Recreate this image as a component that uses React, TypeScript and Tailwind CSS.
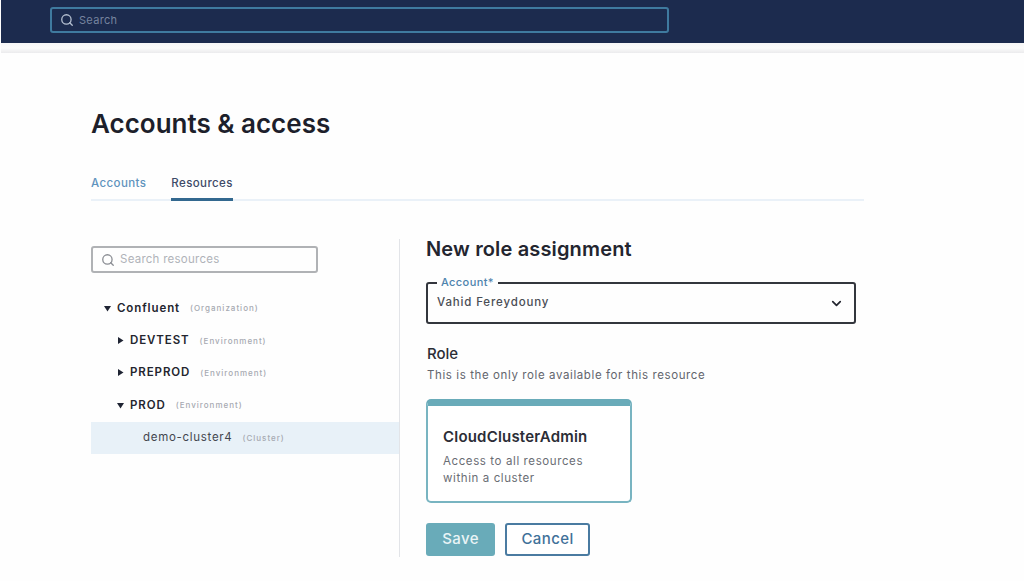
import { ChevronDown, Search } from "lucide-react"

const font = { fontFamily: "Inter, 'Noto Sans', sans-serif" }

interface TreeRow {
  name: string
  kind: string
  indent: string
  open?: boolean
  leaf?: boolean
  selected?: boolean
}

const rows: TreeRow[] = [
  { name: "Confluent", kind: "(Organization)", indent: "pl-[13px]", open: true },
  { name: "DEVTEST", kind: "(Environment)", indent: "pl-[26px]" },
  { name: "PREPROD", kind: "(Environment)", indent: "pl-[26px]" },
  { name: "PROD", kind: "(Environment)", indent: "pl-[26px]", open: true },
  { name: "demo-cluster4", kind: "(Cluster)", indent: "pl-[52px]", leaf: true, selected: true },
]

function Caret({ open }: { open?: boolean }) {
  return (
    <svg width="7" height="7" viewBox="0 0 7 7" className="shrink-0 text-[#1f2433]" fill="currentColor">
      {open ? <path d="M0 1h7L3.5 6.5z" /> : <path d="M1 0l5.5 3.5L1 7z" />}
    </svg>
  )
}

export default function App() {
  return (
    <div style={font} className="h-[581px] w-[1024px] overflow-hidden bg-[#fefefe] pl-px text-[#1f2433]">
      {/* Top bar */}
      <div className="flex h-[43px] items-start bg-[#1c2b4e] pl-[49px] pt-[7px]">
        <div className="flex h-[26px] w-[619px] items-center gap-[5px] rounded-[3px] border-2 border-[#3f7a9f] pl-[8px]">
          <Search className="h-[14px] w-[14px] text-[#b4bfd0]" strokeWidth={2.25} />
          <span className="text-[11px] tracking-[0.3px] text-[#76849e]">Search</span>
        </div>
      </div>
      <div className="h-[10px] bg-gradient-to-b from-[#f6f6f7] via-[#fbfbfb] to-[#ebebed]" />

      <div className="pl-[90px]">
        <h1 className="mt-[53px] text-[26px] leading-[36px] font-semibold text-[#1d1f2b]">Accounts &amp; access</h1>

        {/* Tabs */}
        <div className="mt-[27px] flex h-[32px] w-[773px] gap-[25px] border-b-2 border-[#eaf1f8] text-[11.5px] font-medium tracking-[0.4px]">
          <span className="pt-[6px] text-[#5e93bd]">Accounts</span>
          <span className="-mb-[2px] border-b-[3px] border-[#33688f] pt-[6px] text-[#3d4a68]">Resources</span>
        </div>

        <div className="mt-[38px] flex">
          {/* Resource tree */}
          <div className="h-[318px] w-[309px] shrink-0 border-r border-[#e2e4e8] pt-[7px]">
            <div className="flex h-[27px] w-[227px] items-center gap-[5px] rounded-[3px] border-2 border-[#b0b2b5] pl-[8px]">
              <Search className="h-[14px] w-[14px] text-[#8b8e94]" strokeWidth={2.25} />
              <span className="text-[11.5px] tracking-[0.25px] text-[#b0b3b9]">Search resources</span>
            </div>
            <div className="mt-[19px]">
              {rows.map((row) => (
                <div
                  key={row.name}
                  className={`flex h-[32.4px] items-center ${row.indent} ${row.selected ? "bg-[#e8f1f8]" : ""}`}
                >
                  {!row.leaf && <Caret open={row.open} />}
                  <span
                    className={
                      row.leaf
                        ? "text-[11.5px] tracking-[0.7px] text-[#43464f]"
                        : "ml-[6px] text-[11.5px] font-semibold tracking-[0.9px] text-[#23252f]"
                    }
                  >
                    {row.name}
                  </span>
                  <span className="ml-[10px] text-[8px] font-medium tracking-[1px] text-[#a6a9b1]">{row.kind}</span>
                </div>
              ))}
            </div>
          </div>

          {/* Role form */}
          <div className="pl-[26px]">
            <h2 className="text-[20px] leading-[20px] font-semibold tracking-[0.15px] text-[#23252f]">New role assignment</h2>

            <div className="relative mt-[23px] flex h-[42px] w-[430px] items-center justify-between rounded-[3px] border-2 border-[#33363d] pr-[10px] pl-[9px]">
              <span className="absolute -top-[9px] left-[9px] bg-[#fefefe] px-[4px] text-[11px] leading-[14px] font-medium tracking-[0.4px] text-[#4d83ad]">
                Account*
              </span>
              <span className="text-[11.5px] font-medium tracking-[0.85px] text-[#4a4d55]">Vahid Fereydouny</span>
              <ChevronDown className="h-[15px] w-[15px] text-[#23252f]" strokeWidth={2.75} />
            </div>

            <div className="mt-[20px] pl-px text-[15px] leading-[20px] font-medium text-[#2b2d36]">Role</div>
            <div className="mt-[3px] pl-px text-[11.5px] leading-[16px] tracking-[0.6px] text-[#62656d]">
              This is the only role available for this resource
            </div>

            <div className="mt-[16px] h-[104px] w-[206px] rounded-[5px] border-2 border-t-[7px] border-[#78b4c1] border-t-[#69abb9] bg-white pt-[21px] pl-[15px]">
              <div className="text-[15px] leading-[20px] font-semibold tracking-[0.2px] text-[#2b2d36]">CloudClusterAdmin</div>
              <div className="mt-[6px] text-[11.5px] leading-[17px] tracking-[0.6px] text-[#6a6d74]">
                Access to all resources
                <br />
                within a cluster
              </div>
            </div>

            <div className="mt-[20px] flex gap-[10px]">
              <button className="h-[33px] w-[69px] rounded-[3px] bg-[#69abb9] text-[15px] font-medium tracking-[0.4px] text-[#e9f4f6]">
                Save
              </button>
              <button className="h-[33px] w-[85px] rounded-[3px] border-2 border-[#4a7ba1] bg-white text-[15px] font-medium tracking-[0.4px] text-[#3f7199]">
                Cancel
              </button>
            </div>
          </div>
        </div>
      </div>
    </div>
  )
}
